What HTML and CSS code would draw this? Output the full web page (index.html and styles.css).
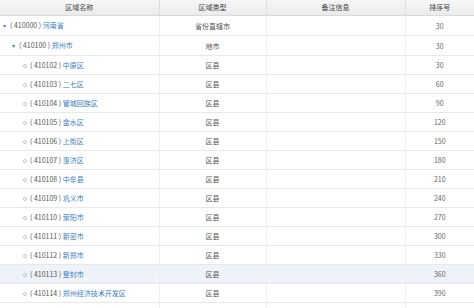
FILE: index.html
```html
<!DOCTYPE html>
<html lang="zh">
<head>
<meta charset="utf-8">
<link rel="stylesheet" href="styles.css">
</head>
<body>
<table class="grid">
  <colgroup>
    <col class="c-name"><col class="c-type"><col class="c-note"><col class="c-sort">
  </colgroup>
  <thead>
    <tr><th>区域名称</th><th>区域类型</th><th>备注信息</th><th>排序号</th></tr>
  </thead>
  <tbody>
    <tr><td class="name lv0"><span class="tog">&#9662;</span><span class="code">( 410000 )</span> <a>河南省</a></td><td class="type">省份直辖市</td><td></td><td class="sort">30</td></tr>
    <tr><td class="name lv1"><span class="tog">&#9662;</span><span class="code">( 410100 )</span> <a>郑州市</a></td><td class="type">地市</td><td></td><td class="sort">30</td></tr>
    <tr><td class="name lv2"><span class="leaf"></span><span class="code">( 410102 )</span> <a>中原区</a></td><td class="type">区县</td><td></td><td class="sort">30</td></tr>
    <tr><td class="name lv2"><span class="leaf"></span><span class="code">( 410103 )</span> <a>二七区</a></td><td class="type">区县</td><td></td><td class="sort">60</td></tr>
    <tr><td class="name lv2"><span class="leaf"></span><span class="code">( 410104 )</span> <a>管城回族区</a></td><td class="type">区县</td><td></td><td class="sort">90</td></tr>
    <tr><td class="name lv2"><span class="leaf"></span><span class="code">( 410105 )</span> <a>金水区</a></td><td class="type">区县</td><td></td><td class="sort">120</td></tr>
    <tr><td class="name lv2"><span class="leaf"></span><span class="code">( 410106 )</span> <a>上街区</a></td><td class="type">区县</td><td></td><td class="sort">150</td></tr>
    <tr><td class="name lv2"><span class="leaf"></span><span class="code">( 410107 )</span> <a>惠济区</a></td><td class="type">区县</td><td></td><td class="sort">180</td></tr>
    <tr><td class="name lv2"><span class="leaf"></span><span class="code">( 410108 )</span> <a>中牟县</a></td><td class="type">区县</td><td></td><td class="sort">210</td></tr>
    <tr><td class="name lv2"><span class="leaf"></span><span class="code">( 410109 )</span> <a>巩义市</a></td><td class="type">区县</td><td></td><td class="sort">240</td></tr>
    <tr><td class="name lv2"><span class="leaf"></span><span class="code">( 410110 )</span> <a>荥阳市</a></td><td class="type">区县</td><td></td><td class="sort">270</td></tr>
    <tr><td class="name lv2"><span class="leaf"></span><span class="code">( 410111 )</span> <a>新密市</a></td><td class="type">区县</td><td></td><td class="sort">300</td></tr>
    <tr><td class="name lv2"><span class="leaf"></span><span class="code">( 410112 )</span> <a>新郑市</a></td><td class="type">区县</td><td></td><td class="sort">330</td></tr>
    <tr class="hover"><td class="name lv2"><span class="leaf"></span><span class="code">( 410113 )</span> <a>登封市</a></td><td class="type">区县</td><td></td><td class="sort">360</td></tr>
    <tr><td class="name lv2"><span class="leaf"></span><span class="code">( 410114 )</span> <a>郑州经济技术开发区</a></td><td class="type">区县</td><td></td><td class="sort">390</td></tr>
    <tr><td class="name lv2"></td><td class="type"></td><td></td><td class="sort"></td></tr>
  </tbody>
</table>
</body>
</html>
```

FILE: styles.css
```css
html, body {
  margin: 0;
  padding: 0;
  background: #fff;
  overflow: hidden;
}
.grid {
  width: 474px;
  border-collapse: collapse;
  table-layout: fixed;
  font-family: "Noto Sans CJK SC", "Noto Sans", sans-serif;
  font-size: 7px;
  color: #555;
}
.c-name { width: 159px; }
.c-type { width: 107px; }
.c-note { width: 139px; }
.c-sort { width: 69px; }
.grid th {
  height: 15px;
  padding: 0;
  font-weight: normal;
  color: #444;
  background: linear-gradient(#f6f6f6, #ebebeb);
  border-bottom: 1px solid #d9d9d9;
  border-left: 1px solid #dedede;
  text-align: center;
  line-height: 15px;
}
.grid th:first-child, .grid td:first-child { border-left: none; }
.grid td {
  height: 18px;
  padding: 0;
  line-height: 18px;
  border-bottom: 1px solid #e8e8e8;
  border-left: 1px solid #f0f0f0;
  white-space: nowrap;
  overflow: hidden;
}
.grid tr.hover td { background: #eef3f9; }
.type, .sort { text-align: center; }
.sort { color: #666; }
.name.lv0 { padding-left: 3px; }
.name.lv1 { padding-left: 12px; }
.name.lv2 { padding-left: 23px; }
.tog {
  display: inline-block;
  width: 7px;
  font-size: 6px;
  color: #4a7fb5;
}
.leaf {
  display: inline-block;
  box-sizing: border-box;
  width: 4px;
  height: 4px;
  margin: 0 3px 0 0;
  border: 1px solid #b7c9dc;
  border-radius: 50%;
  vertical-align: middle;
}
.code { color: #555; }
.name a { color: #3b7cc0; }
```
